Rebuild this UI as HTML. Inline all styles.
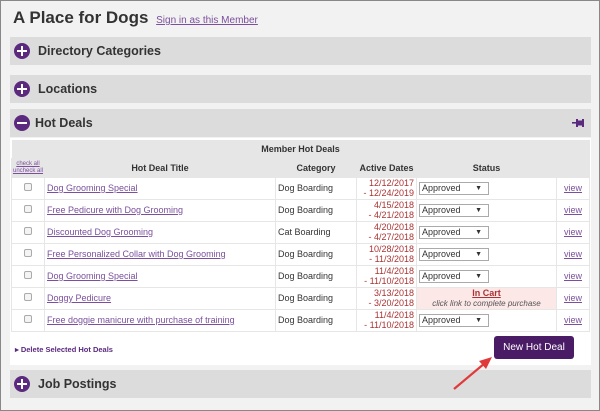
<!DOCTYPE html>
<html><head><style>
*{margin:0;padding:0;box-sizing:border-box}
body{width:600px;height:411px;background:#f2f2f2;font-family:"Liberation Sans",sans-serif;position:relative;overflow:hidden;border:1px solid #888}
.a{position:absolute}
h1{position:absolute;left:12px;top:7px;font-size:17px;font-weight:bold;color:#333}
.sign{font-size:10px;color:#7b4f9d;text-decoration:underline;font-weight:normal;margin-left:3px}
.bar{position:absolute;left:9px;width:581px;height:28px;background:#dcdcdc;font-size:12.5px;font-weight:bold;color:#333}
.bar span{position:absolute;left:28px;top:7px}
.ic{position:absolute;left:4px;top:6px;width:16px;height:16px;border-radius:50%;background:#5b2a7e}
.ic:before{content:"";position:absolute;left:3px;top:7px;width:10px;height:2.4px;background:#fff}
.ic.p:after{content:"";position:absolute;left:7px;top:3px;width:2.4px;height:10px;background:#fff}
.tb{position:absolute;left:9px;top:137px;width:581px;height:227px;background:#fff}
table{position:absolute;left:10px;top:139px;width:579px;border-collapse:collapse;font-size:9px;color:#333}
td,th{border:1px solid #e6e6e6;height:22px;padding:0 2px}
th{background:#e6e6e6;font-weight:bold;height:19px}
a{color:#7b4f9d;text-decoration:underline}
.d{color:#a33;text-align:right;line-height:10px;white-space:nowrap}
.sel{display:inline-block;width:70px;height:13px;border:1px solid #aaa;font-size:9px;line-height:11px;padding-left:2px;position:relative;background:#fff}
.sel:after{content:"▼";position:absolute;right:6px;top:0;font-size:7px}
.cb{display:inline-block;width:8px;height:8px;border:1px solid #aaa;border-radius:2px;background:#f4f4f4}
</style></head><body>
<h1>A Place for Dogs <span class="sign">Sign in as this Member</span></h1>
<div class="bar" style="top:36px"><div class="ic p"></div><span>Directory Categories</span></div>
<div class="bar" style="top:74px"><div class="ic p"></div><span>Locations</span></div>
<div class="bar" style="top:108px"><div class="ic"></div><span style="left:25px">Hot Deals</span>
<svg class="a" style="right:7px;top:10px" width="12" height="8"><rect x="0" y="3" width="5" height="1.6" fill="#5b2a7e"/><rect x="4" y="0" width="2" height="8" fill="#5b2a7e"/><rect x="6" y="1.5" width="5" height="5" fill="#5b2a7e"/><rect x="10" y="0" width="2" height="8" fill="#5b2a7e"/></svg></div>
<div class="tb"></div>
<table>
<tr><th colspan="6" style="border:0;height:18px">Member Hot Deals</th></tr>
<tr><th style="width:33px;font-size:6px;font-weight:normal;line-height:7px;white-space:nowrap;padding:0"><a>check all</a><br><a>uncheck all</a></th><th style="width:231px">Hot Deal Title</th><th style="width:81px">Category</th><th style="width:60px">Active Dates</th><th style="width:140px">Status</th><th></th></tr>
<tr><td align=center><span class=cb></span></td><td><a>Dog Grooming Special</a></td><td>Dog Boarding</td><td class=d>12/12/2017<br>- 12/24/2019</td><td><span class=sel>Approved</span></td><td align=center><a>view</a></td></tr>
<tr><td align=center><span class=cb></span></td><td><a>Free Pedicure with Dog Grooming</a></td><td>Dog Boarding</td><td class=d>4/15/2018<br>- 4/21/2018</td><td><span class=sel>Approved</span></td><td align=center><a>view</a></td></tr>
<tr><td align=center><span class=cb></span></td><td><a>Discounted Dog Grooming</a></td><td>Cat Boarding</td><td class=d>4/20/2018<br>- 4/27/2018</td><td><span class=sel>Approved</span></td><td align=center><a>view</a></td></tr>
<tr><td align=center><span class=cb></span></td><td><a>Free Personalized Collar with Dog Grooming</a></td><td>Dog Boarding</td><td class=d>10/28/2018<br>- 11/3/2018</td><td><span class=sel>Approved</span></td><td align=center><a>view</a></td></tr>
<tr><td align=center><span class=cb></span></td><td><a>Dog Grooming Special</a></td><td>Dog Boarding</td><td class=d>11/4/2018<br>- 11/10/2018</td><td><span class=sel>Approved</span></td><td align=center><a>view</a></td></tr>
<tr><td align=center><span class=cb></span></td><td><a>Doggy Pedicure</a></td><td>Dog Boarding</td><td class=d>3/13/2018<br>- 3/20/2018</td><td style="background:#fde8e8;text-align:center;line-height:10px"><a style="color:#a33;font-weight:bold">In Cart</a><br><i style="color:#555;font-size:8px">click link to complete purchase</i></td><td align=center><a>view</a></td></tr>
<tr><td align=center><span class=cb></span></td><td><a>Free doggie manicure with purchase of training</a></td><td>Dog Boarding</td><td class=d>11/4/2018<br>- 11/10/2018</td><td><span class=sel>Approved</span></td><td align=center><a>view</a></td></tr>
</table>
<div class="a" style="left:14px;top:344px;font-size:7.5px;font-weight:bold;color:#5b2a7e">▸ Delete Selected Hot Deals</div>
<div class="a" style="left:493px;top:335px;width:80px;height:23px;background:#4a1c66;border-radius:3px;color:#fff;font-size:10px;text-align:center;line-height:23px">New Hot Deal</div>
<div class="bar" style="top:369px"><div class="ic p"></div><span>Job Postings</span></div>
<svg class="a" style="left:448px;top:350px" width="50" height="45"><line x1="5" y1="38" x2="36" y2="12" stroke="#e03a3a" stroke-width="2.2"/><polygon points="43,6 30,10 37,18" fill="#e03a3a"/></svg>
</body></html>
